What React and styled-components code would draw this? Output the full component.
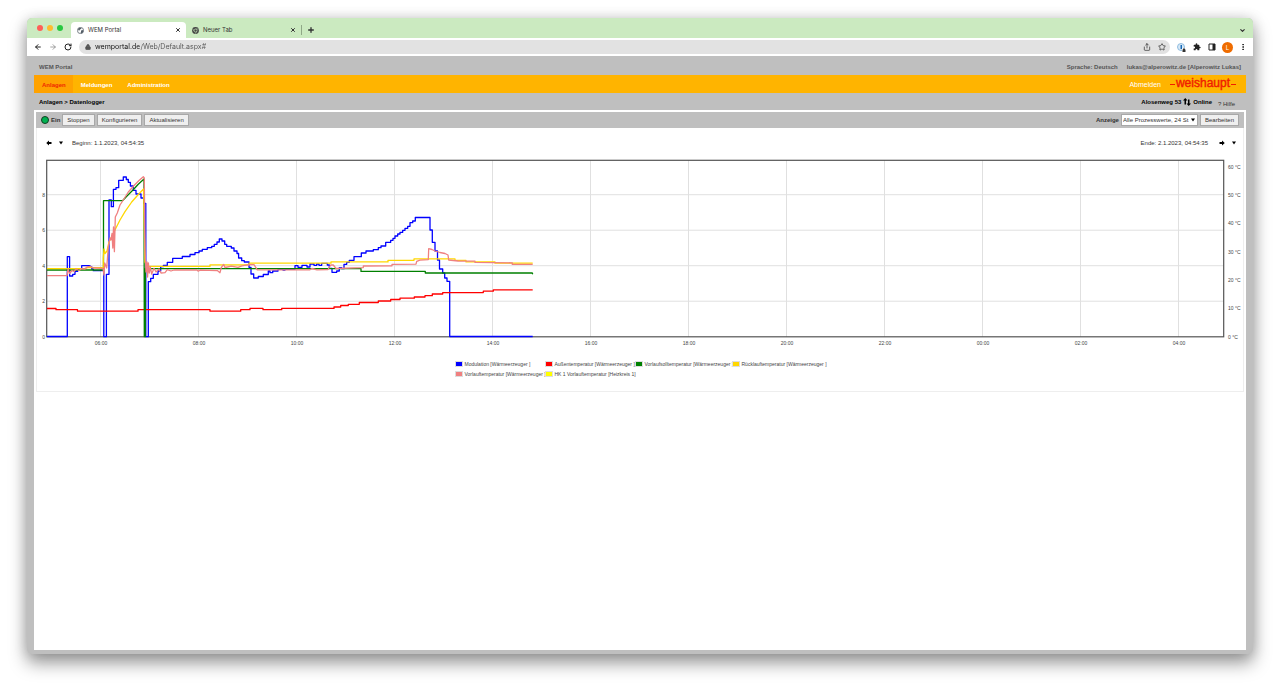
import React from "react";
import styled, { createGlobalStyle } from "styled-components";
import {
  ArrowLeft,
  ArrowRight,
  RotateCw,
  Plus,
  X,
  ChevronDown,
  Lock,
  Star,
  Share,
  EllipsisVertical,
} from "lucide-react";

const sans = '"Liberation Sans", Arial, sans-serif';
const chromeSans = 'Inter, "Liberation Sans", sans-serif';

const GlobalStyle = createGlobalStyle`
  *, *::before, *::after { box-sizing: border-box; }
  body { margin: 0; background: #fff; font: 6px/8px ${sans}; color: #000; }
  button, input, select { font: inherit; color: inherit; margin: 0; }
  svg { display: block; flex: none; }
`;

/* ---------- Browser window ---------- */

const Desktop = styled.div`
  display: flex;
  min-height: 100vh;
  padding: 18px 27px 36px 27px;
`;

const BrowserWindow = styled.div`
  flex: 1;
  min-width: 0;
  display: flex;
  flex-direction: column;
  border-radius: 5px;
  overflow: hidden;
  background: #bfbfbf;
  box-shadow: 0 9px 18px rgba(0, 0, 0, 0.4), 0 0 14px rgba(0, 0, 0, 0.14);
`;

const TabStrip = styled.div`
  display: flex;
  align-items: flex-end;
  height: 20px;
  background: #cbeac0;
  font-family: ${chromeSans};
  color: #333;
`;

const TrafficLights = styled.div`
  display: flex;
  align-self: center;
  gap: 4px;
  padding: 0 8px 0 10px;
`;

const Light = styled.span`
  width: 6px;
  height: 6px;
  border-radius: 50%;
  background: ${(p) => p.$color};
`;

const Tab = styled.div`
  display: flex;
  align-items: center;
  gap: 4px;
  width: 115px;
  height: 16px;
  padding: 0 4px 0 6px;
  border-radius: 4px 4px 0 0;
  background: ${(p) => (p.$active ? "#fff" : "transparent")};
`;

const TabTitle = styled.span`
  flex: 1;
`;

const IconButton = styled.button`
  display: grid;
  place-items: center;
  width: ${(p) => p.$size || 8}px;
  height: ${(p) => p.$size || 8}px;
  padding: 0;
  border: 0;
  background: none;
`;

const NewTab = styled.div`
  display: flex;
  align-items: center;
  height: 10px;
  margin: 0 0 3px;
  padding-left: 5px;
  border-left: 1px solid #8fa887;
`;

const TabMenu = styled.div`
  margin: 0 7px 4px auto;
`;

const AddressBar = styled.div`
  display: flex;
  align-items: center;
  gap: 7px;
  height: 18px;
  padding: 0 6px 0 7px;
  background: #fff;
  color: #222;
`;

const Omnibox = styled.div`
  flex: 1;
  display: flex;
  align-items: center;
  gap: 4px;
  height: 14px;
  padding: 0 4px 0 6px;
  border-radius: 7px;
  background: #e2e2e2;
`;

const UrlInput = styled.input`
  flex: 1;
  min-width: 0;
  height: 10px;
  padding: 0;
  border: 0;
  outline: 0;
  font: 7px/10px ${chromeSans};
  color: transparent;
  background: linear-gradient(90deg, #111 44px, #555 44px);
  background-clip: text;
  -webkit-background-clip: text;
`;

const Avatar = styled.span`
  display: grid;
  place-items: center;
  width: 11px;
  height: 11px;
  border-radius: 50%;
  background: #ef6c00;
  color: #fff;
  font: 6px/11px ${chromeSans};
`;

const ToolbarIcons = styled.div`
  display: flex;
  align-items: center;
  gap: 6px;
`;

/* ---------- Portal ---------- */

const Portal = styled.div`
  flex: 1;
  display: flex;
  flex-direction: column;
  padding: 0 7px 4px;
`;

const TopLine = styled.header`
  display: flex;
  justify-content: space-between;
  align-items: center;
  height: 19px;
  padding: 2px 5px 0;
  color: #555;
  font-weight: bold;
`;

const Account = styled.div`
  display: flex;
  gap: 9px;
`;

const NavBar = styled.nav`
  display: flex;
  align-items: center;
  height: 18px;
  background: #ffb400;
`;

const NavLink = styled.a`
  display: flex;
  align-items: center;
  height: 18px;
  padding: 1px 7px 0 8px;
  font-weight: bold;
  text-decoration: none;
  color: ${(p) => (p.$active ? "#f02800" : "#fff")};
  background: ${(p) => (p.$active ? "#ffa200" : "transparent")};
`;

const NavEnd = styled.div`
  display: flex;
  align-items: center;
  gap: 9px;
  margin-left: auto;
  padding-right: 10px;
`;

const LogoutLink = styled.a`
  padding-top: 1px;
  font-size: 7px;
  color: #fff;
  text-decoration: none;
`;

const Logo = styled.div`
  display: flex;
  align-items: center;
  gap: 1px;
  height: 18px;
  padding-bottom: 2px;
  font-size: 12px;
  line-height: 16px;
  color: #f01c00;
  -webkit-text-stroke: 0.4px #f01c00;

  &::before,
  &::after {
    content: "";
    width: 5px;
    height: 1px;
    margin-top: 2px;
    background: #f01c00;
  }
`;

const CrumbLine = styled.div`
  display: flex;
  justify-content: space-between;
  align-items: center;
  height: 17px;
  padding: 1px 11px 0 5px;
  font-weight: bold;
`;

const PlantStatus = styled.div`
  display: flex;
  align-items: center;
  gap: 2px;
`;

const HelpLink = styled.a`
  align-self: flex-end;
  padding: 3px 0 0 4px;
  color: #333;
  font-weight: normal;
  text-decoration: none;
`;

const Content = styled.main`
  flex: 1;
  padding: 2px;
  background: #fff;
`;

const Panel = styled.section`
  border: 1px solid #eee;
  border-top: 0;
`;

const Toolbar = styled.div`
  display: flex;
  align-items: center;
  gap: 2px;
  height: 16px;
  margin: 0 -1px;
  padding: 0 5px;
  background: #bfbfbf;
`;

const StatusDot = styled.span`
  width: 8px;
  height: 8px;
  border: 1px solid #123d20;
  border-radius: 50%;
  background: #00b050;
`;

const StrongLabel = styled.label`
  font-weight: bold;
  color: #333;
`;

const ToolButton = styled.button`
  height: 12px;
  padding: 0 4px;
  border: 1px solid #a8a8a8;
  background: #efefef;
  color: #333;
  line-height: 10px;
`;

const ToolbarEnd = styled.div`
  display: flex;
  align-items: center;
  gap: 2px;
  margin-left: auto;
`;

const SelectBox = styled.span`
  display: grid;
  grid-template-columns: 1fr 7px;
  align-items: center;
  width: 77px;
  height: 12px;
  border: 1px solid #a8a8a8;
  background: #fff;

  select {
    grid-area: 1 / 1 / 2 / 3;
    appearance: none;
    height: 10px;
    padding: 0 7px 0 1px;
    border: 0;
    background: none;
    line-height: 10px;
    color: #333;
  }

  svg {
    grid-area: 1 / 2;
    pointer-events: none;
  }
`;

const RangeBar = styled.div`
  display: flex;
  justify-content: space-between;
  align-items: center;
  height: 28px;
  padding: 1px 5px 0 8px;
  color: #333;
`;

const RangeGroup = styled.div`
  display: flex;
  align-items: center;
  gap: 4px;
`;

const RangeText = styled.span`
  padding: 0 ${(p) => (p.$end ? 6 : 0)}px 0 ${(p) => (p.$end ? 0 : 3)}px;
`;

const ChartSvg = styled.svg`
  width: 100%;
  height: auto;

  text {
    font: 5px ${sans};
    fill: #444;
  }
`;

const Legend = styled.ul`
  display: grid;
  grid-template-columns: 90px 90px 97px 94px;
  justify-content: center;
  row-gap: 2px;
  margin: 0;
  padding: 4px 0 13px 0;
  list-style: none;
  font-size: 5px;
  color: #444;
`;

const LegendItem = styled.li`
  display: flex;
  align-items: center;
  gap: 2px;
  white-space: nowrap;

  &::before {
    content: "";
    flex: none;
    width: 8px;
    height: 6px;
    border: 1px solid #ddd;
    background: ${(p) => p.$color};
  }
`;

/* ---------- Chart data ---------- */

const PLOT = { left: 47, right: 1224, top: 160, bottom: 337 };
const HOURS = ["06:00", "08:00", "10:00", "12:00", "14:00", "16:00", "18:00", "20:00", "22:00", "00:00", "02:00", "04:00"];
const hourX = (i) => 101 + i * 98;
const levelY = (v) => 336.7 - v * 17.75;
const celsiusY = (t) => 336.7 - t * 2.833;

const modulation = [
  [47, 336.5], [67.3, 256.7], [69.6, 276], [72.7, 274.3], [75, 271.3], [77.7, 269],
  [81.7, 265.7], [90, 267], [91.7, 269], [93.3, 270.7], [103.8, 336.7], [106.4, 274.3],
  [109, 200], [111.3, 206.7], [113.4, 189.3], [116, 187.7], [118.7, 180.3], [123.3, 177],
  [126.3, 179.5], [128.3, 182.3], [130.4, 186], [133.3, 190.3], [136, 194], [141, 198],
  [143.7, 203.3], [145.8, 336.7], [148.3, 281.7], [150.7, 278.3], [153.3, 274.3],
  [158, 271], [160.7, 266.7], [163.3, 265.5], [167.3, 262.3], [172.7, 258.3], [182.3, 256.5],
  [190, 254.5], [195, 252.7], [199, 251], [202.3, 249.3], [207.3, 247.7], [211.7, 246.3],
  [214.3, 244.3], [217, 242], [219.3, 239], [222, 241], [224.7, 244.3], [226.7, 246.3],
  [231.3, 248], [234, 251], [237, 253.5], [238.6, 258], [241.7, 260.7], [244.3, 262],
  [249, 267.3], [251, 274], [253.7, 278], [258.3, 276.5], [263.3, 274.5], [268.3, 271],
  [270, 272.7], [272.7, 271], [278, 269.3], [283, 270], [285, 269.3], [295, 265.7],
  [298, 267.3], [302, 265.3], [307, 267], [310, 264], [314, 265.3], [316.7, 264],
  [319, 265.3], [321.7, 263.3], [327.3, 265], [329.3, 268.3], [332, 272.3], [336.7, 271],
  [339.3, 267.7], [341.7, 268.7], [344, 264.3], [346.7, 262.3], [349.3, 260.3],
  [354, 256.7], [361.3, 253], [366, 251], [373.3, 249.7], [378.3, 247.7], [381, 246],
  [385.7, 242.3], [390.7, 240.3], [393, 238.3], [395, 236], [397.7, 234], [400, 232.3],
  [402.7, 230.3], [405, 228.3], [407.7, 226.3], [410, 222.7], [412.7, 221], [415.3, 217.5],
  [430, 230], [432.3, 242.3], [435, 251], [437.5, 260], [439.5, 269], [442.7, 273],
  [444.7, 278], [447, 281.3], [449.7, 336.5], [532.7, 336.5],
];

const outside = [
  [47, 308.5], [56, 309.7], [77.5, 311.2], [138, 309.7], [210, 311.2], [240.7, 309.7],
  [250, 308.4], [263, 309.7], [281.7, 308.4], [334, 307], [340.7, 305.5], [348.3, 304.3],
  [359.3, 302.5], [378.3, 301], [390.7, 299.5], [400, 298.2], [414.3, 297], [425, 295.7],
  [432.3, 294], [442.7, 292.6], [483.3, 291.2], [493.3, 289.9], [532.7, 289.9],
];

const flowTarget = [
  [47, 270], [103.5, 270], [103.5, 200.7], [122.5, 200.7], [127, 196], [133, 190],
  [138, 184.5], [144, 179], [144.3, 336.7], [145.3, 336.7], [145.3, 268.7], [361, 268.7],
  [361, 271.4], [425.3, 271.4], [425.3, 273], [532.3, 273], [532.7, 274.2],
];

const returnFlow = [
  [47, 268.6], [84, 268.6], [88, 267.6], [103.3, 267.6], [103.3, 258], [104, 249],
  [105, 253.5], [107, 251], [109, 242], [112, 236], [115.7, 228.5], [120, 220], [125, 211.7],
  [131.7, 202], [138.3, 194.5], [143.6, 189], [145, 262], [147, 266.4], [210, 266.4],
  [210, 264.8], [249, 264.8], [249, 263.2], [331, 263.2], [331, 261.9], [388, 261.9],
  [388, 260.3], [414, 260.3], [414, 258.9], [455, 258.9], [455, 260.4], [466, 260.4],
  [466, 261.9], [495, 261.9], [495, 263.2], [532.7, 263.2],
];

const flow = [
  [47, 275.6], [67, 275.6], [68, 269], [69.5, 273.5], [72, 270.5], [74, 271.5], [76, 269],
  [79, 270.5], [82, 268.5], [85, 269], [87, 267], [90, 266.3], [94, 268], [103, 268.3],
  [104, 275], [104.7, 263], [106.7, 268], [108.3, 247], [110, 238], [111, 240], [112, 233.5],
  [112.8, 248], [113.5, 227], [114.4, 251.7], [115.3, 217], [117.3, 213], [120, 205],
  [123.3, 200], [128.3, 192], [135, 184.5], [139, 180.5], [143.3, 176.7], [144.3, 178],
  [145, 250], [146, 272], [147, 262], [147.6, 277], [148.4, 263], [149.3, 273], [150.3, 267],
  [151.7, 274], [154, 268.3], [156, 272], [159, 269], [161, 273], [165, 272.6], [167.3, 269.7],
  [171, 271], [174, 270], [197, 270], [198.3, 271.2], [200, 270], [217.3, 270.6],
  [220, 272.7], [221.3, 267.5], [223.7, 264.4], [225, 267.5], [231.3, 266.2], [238, 267.3],
  [242, 265.8], [249, 264.6], [254, 264.6], [257.3, 269.8], [310, 269.8], [312, 268.5],
  [317, 269.8], [328, 269.5], [330.7, 265], [333.3, 265], [336, 268.5], [363.3, 267.6],
  [363.3, 266], [392, 265.8], [392, 264.4], [416, 264.2], [416.7, 261.4], [420, 260.2],
  [428.3, 259.6], [428.7, 248.7], [432, 249.5], [435, 251], [440, 252.5], [445, 253.5],
  [448, 255], [448.7, 260], [458, 261], [475, 261.2], [475, 262.4], [512.3, 262.8],
  [512.3, 264.4], [532.7, 264.4],
];

const stepPath = (points) =>
  points.map(([x, y], i) => (i === 0 ? `M${x} ${y}` : `H${x}V${y}`)).join("");
const linePath = (points) => "M" + points.map((p) => p.join(" ")).join("L");

const SERIES = [
  { name: "Modulation [Wärmeerzeuger ]", color: "#0000ff", d: stepPath(modulation) },
  { name: "Außentemperatur [Wärmeerzeuger ]", color: "#ff0000", d: stepPath(outside) },
  { name: "Vorlaufsolltemperatur [Wärmeerzeuger ]", color: "#008000", d: linePath(flowTarget) },
  { name: "Rücklauftemperatur [Wärmeerzeuger ]", color: "#ffd700", d: linePath(returnFlow) },
  { name: "Vorlauftemperatur [Wärmeerzeuger ]", color: "#f08080", d: linePath(flow) },
  { name: "HK 1 Vorlauftemperatur [Heizkreis 1]", color: "#ffff00" },
];

function Chart() {
  return (
    <ChartSvg viewBox="37 156 1206 200" role="img" aria-label="Datenlogger">
      <g stroke="#e0e0e0" strokeWidth="1">
        {HOURS.map((h, i) => (
          <path key={h} d={`M${hourX(i) - 0.5} ${PLOT.top}V${PLOT.bottom}`} />
        ))}
        {[2, 4, 6, 8].map((v) => (
          <path key={v} d={`M${PLOT.left} ${levelY(v)}H${PLOT.right}`} />
        ))}
      </g>
      <rect x="46.7" y="160.3" width="1177" height="176.5" fill="none" stroke="#545454" strokeWidth="1.2" />
      <g fill="none" strokeWidth="1.3" strokeLinejoin="round">
        {SERIES.filter((s) => s.d).map((s) => (
          <path key={s.name} d={s.d} stroke={s.color} />
        ))}
      </g>
      {HOURS.map((h, i) => (
        <text key={h} x={hourX(i)} y="345" textAnchor="middle">{h}</text>
      ))}
      {[0, 2, 4, 6, 8].map((v) => (
        <text key={v} x="45" y={levelY(v) + 2} textAnchor="end">{v}</text>
      ))}
      {[0, 10, 20, 30, 40, 50, 60].map((t) => (
        <text key={t} x="1228" y={celsiusY(t) + 2}>{`${t} °C`}</text>
      ))}
    </ChartSvg>
  );
}

/* ---------- Icons ---------- */

const GlobeIcon = () => (
  <svg width="7" height="7" viewBox="0 0 14 14">
    <circle cx="7" cy="7" r="6.2" fill="#fff" stroke="#555f68" strokeWidth="1.5" />
    <path d="M2 4c2-3 5-3 7-2L8 4 6 5 5 7 3 7zM8 7l4-1 1 2-2 4-3 1-1-2 1-1z" fill="#555f68" />
  </svg>
);

const ChromeIcon = () => (
  <svg width="7" height="7" viewBox="0 0 14 14">
    <circle cx="7" cy="7" r="6.8" fill="#444" />
    <circle cx="7" cy="7" r="3" fill="#444" stroke="#cbeac0" strokeWidth="1.2" />
    <path d="M7 4h6M4.4 8.5L1.5 3.5M9.6 8.5L6.5 13.5" stroke="#cbeac0" strokeWidth="1" />
  </svg>
);

const PasswordIcon = () => (
  <svg width="9" height="9" viewBox="0 0 18 18">
    <circle cx="8" cy="8" r="7" fill="#d8e9f7" stroke="#86b5dc" strokeWidth="1.8" />
    <path d="M7 4h3v8H7z" fill="#1769b5" />
    <rect x="10" y="10" width="8" height="8" rx="1" fill="#fff" />
    <path d="M11 13h6v5h-6zM12 13v-2h4v2" fill="#333" />
  </svg>
);

const PuzzleIcon = () => (
  <svg width="8" height="8" viewBox="0 0 24 24">
    <path
      d="M20.5 11H19V7a2 2 0 0 0-2-2h-4V3.5a2.5 2.5 0 0 0-5 0V5H4a2 2 0 0 0-2 2v3.8h1.5a2.7 2.7 0 0 1 0 5.4H2V20a2 2 0 0 0 2 2h3.8v-1.5a2.7 2.7 0 0 1 5.4 0V22H17a2 2 0 0 0 2-2v-4h1.500a2.500 2.500 0 0 0 0-5z"
      fill="#222"
    />
  </svg>
);

const SidePanelIcon = () => (
  <svg width="8" height="8" viewBox="0 0 16 16">
    <path d="M2 2h12v12H2z" fill="none" stroke="#222" strokeWidth="2" />
    <path d="M9 2h5v12H9z" fill="#222" />
  </svg>
);

const BoldArrow = ({ right }) => (
  <svg width="6" height="6" viewBox="0 0 12 12">
    <path
      d={right ? "M6 1l5.500 5L6 11V8H1V4h5z" : "M6 1L.5 6 6 11V8h5V4H6z"}
      fill="#000"
    />
  </svg>
);

const Caret = () => (
  <svg width="6" height="4" viewBox="0 0 12 8">
    <path d="M2 1h8L6 7z" fill="#000" />
  </svg>
);

const OnlineArrows = () => (
  <svg width="8" height="8" viewBox="0 0 16 16">
    <path d="M4.500 0L9 5H6v8H3V5H0zM11.500 16L7 11h3V3h3v8h3z" fill="#000" />
  </svg>
);

/* ---------- Page ---------- */

export default function App() {
  return (
    <>
      <GlobalStyle />
      <Desktop>
        <BrowserWindow>
          <TabStrip>
            <TrafficLights>
              <Light $color="#ff5f57" />
              <Light $color="#febc2e" />
              <Light $color="#28c840" />
            </TrafficLights>
            <Tab $active>
              <GlobeIcon />
              <TabTitle>WEM Portal</TabTitle>
              <IconButton aria-label="Tab schließen"><X size={6} strokeWidth={4} /></IconButton>
            </Tab>
            <Tab>
              <ChromeIcon />
              <TabTitle>Neuer Tab</TabTitle>
              <IconButton aria-label="Tab schließen"><X size={6} strokeWidth={4} /></IconButton>
            </Tab>
            <NewTab>
              <IconButton aria-label="Neuer Tab"><Plus size={8} strokeWidth={4} /></IconButton>
            </NewTab>
            <TabMenu>
              <IconButton aria-label="Tabs durchsuchen"><ChevronDown size={7} strokeWidth={4} /></IconButton>
            </TabMenu>
          </TabStrip>

          <AddressBar>
            <IconButton aria-label="Zurück"><ArrowLeft size={8} strokeWidth={3} /></IconButton>
            <IconButton aria-label="Vorwärts"><ArrowRight size={8} strokeWidth={2} color="#777" /></IconButton>
            <IconButton aria-label="Neu laden"><RotateCw size={8} strokeWidth={3} /></IconButton>
            <Omnibox>
              <Lock size={6} strokeWidth={3} fill="#555" color="#555" />
              <UrlInput aria-label="Adresse" defaultValue="wemportal.de/Web/Default.aspx#" />
              <ToolbarIcons>
                <IconButton $size={9} aria-label="Teilen"><Share size={8} strokeWidth={2} /></IconButton>
                <IconButton $size={9} aria-label="Lesezeichen"><Star size={8} strokeWidth={2} /></IconButton>
              </ToolbarIcons>
            </Omnibox>
            <ToolbarIcons>
              <IconButton $size={9} aria-label="Passwörter"><PasswordIcon /></IconButton>
              <IconButton $size={9} aria-label="Erweiterungen"><PuzzleIcon /></IconButton>
              <IconButton $size={9} aria-label="Seitenleiste"><SidePanelIcon /></IconButton>
              <Avatar>L</Avatar>
              <IconButton $size={8} aria-label="Menü"><EllipsisVertical size={8} strokeWidth={3} /></IconButton>
            </ToolbarIcons>
          </AddressBar>

          <Portal>
            <TopLine>
              <span>WEM Portal</span>
              <Account>
                <span>Sprache: Deutsch</span>
                <span>lukas@alperowitz.de [Alperowitz Lukas]</span>
              </Account>
            </TopLine>

            <NavBar>
              <NavLink href="#" $active>Anlagen</NavLink>
              <NavLink href="#">Meldungen</NavLink>
              <NavLink href="#">Administration</NavLink>
              <NavEnd>
                <LogoutLink href="#">Abmelden</LogoutLink>
                <Logo>weishaupt</Logo>
              </NavEnd>
            </NavBar>

            <CrumbLine>
              <span>Anlagen &gt; Datenlogger</span>
              <PlantStatus>
                <span>Alosenweg 53</span>
                <OnlineArrows />
                <span>Online</span>
                <HelpLink href="#">? Hilfe</HelpLink>
              </PlantStatus>
            </CrumbLine>

            <Content>
              <Panel>
                <Toolbar>
                  <StatusDot />
                  <StrongLabel as="span">Ein</StrongLabel>
                  <ToolButton>Stoppen</ToolButton>
                  <ToolButton>Konfigurieren</ToolButton>
                  <ToolButton>Aktualisieren</ToolButton>
                  <ToolbarEnd>
                    <StrongLabel htmlFor="view">Anzeige</StrongLabel>
                    <SelectBox>
                      <select id="view">
                        <option>Alle Prozesswerte, 24 St</option>
                      </select>
                      <Caret />
                    </SelectBox>
                    <ToolButton>Bearbeiten</ToolButton>
                  </ToolbarEnd>
                </Toolbar>

                <RangeBar>
                  <RangeGroup>
                    <IconButton aria-label="Früher"><BoldArrow /></IconButton>
                    <IconButton aria-label="Beginn wählen"><Caret /></IconButton>
                    <RangeText>Beginn: 1.1.2023, 04:54:35</RangeText>
                  </RangeGroup>
                  <RangeGroup>
                    <RangeText $end>Ende: 2.1.2023, 04:54:35</RangeText>
                    <IconButton aria-label="Später"><BoldArrow right /></IconButton>
                    <IconButton aria-label="Ende wählen"><Caret /></IconButton>
                  </RangeGroup>
                </RangeBar>

                <Chart />

                <Legend>
                  {SERIES.map((s) => (
                    <LegendItem key={s.name} $color={s.color}>{s.name}</LegendItem>
                  ))}
                </Legend>
              </Panel>
            </Content>
          </Portal>
        </BrowserWindow>
      </Desktop>
    </>
  );
}
